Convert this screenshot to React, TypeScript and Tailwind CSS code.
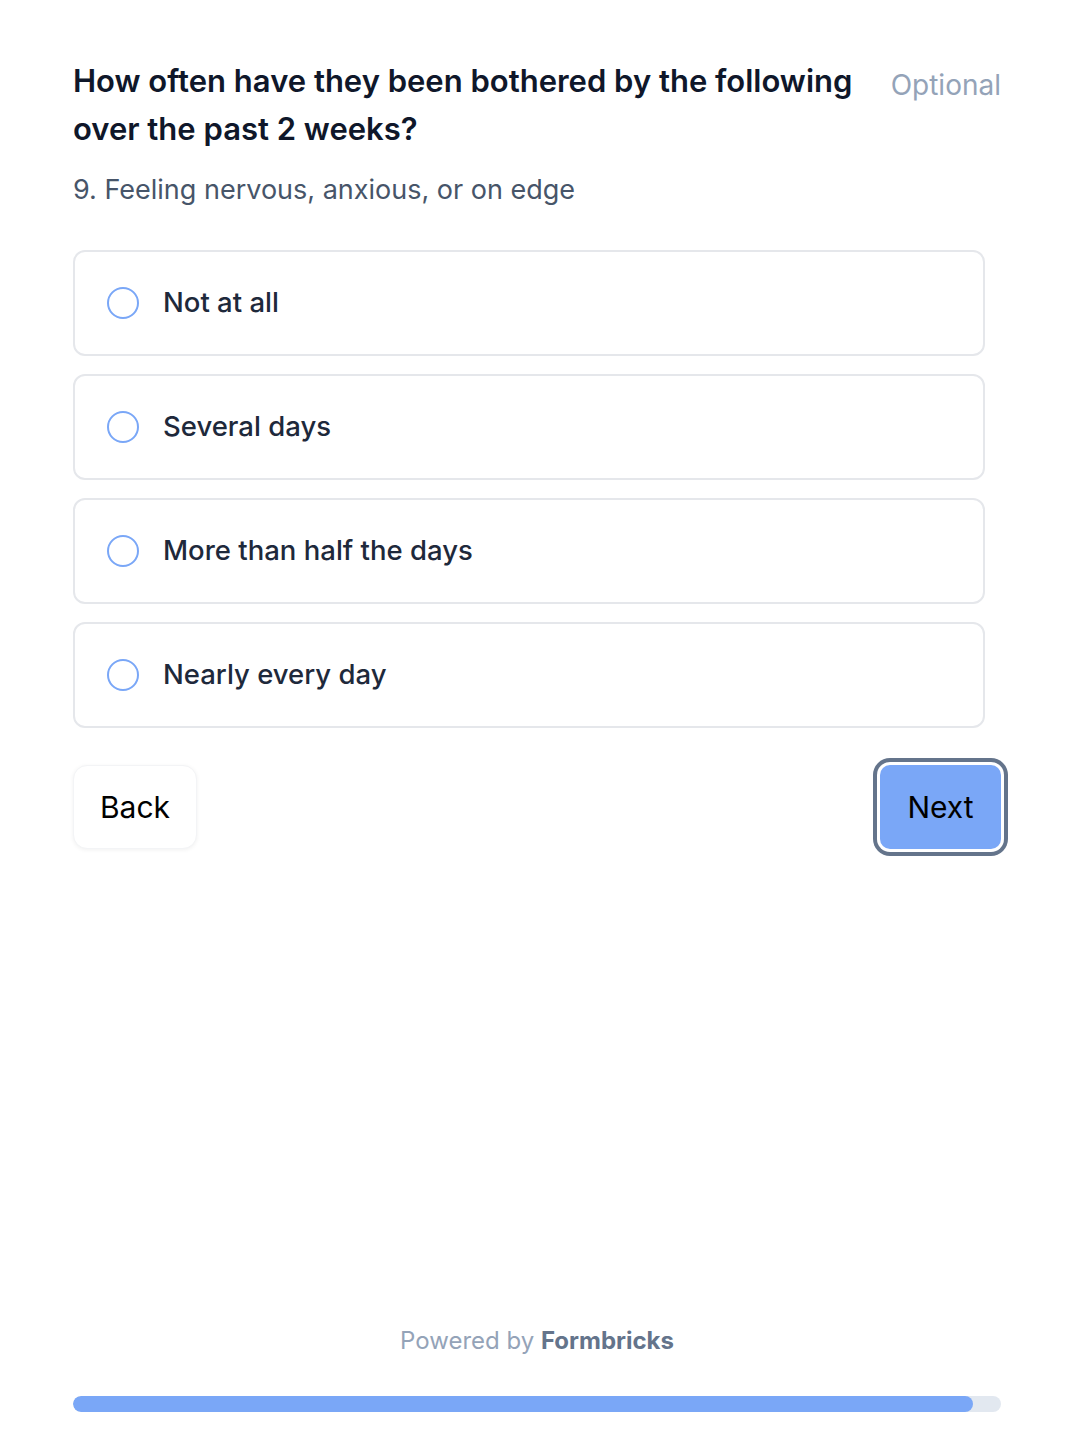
import React from "react";

const options = ["Not at all", "Several days", "More than half the days", "Nearly every day"];

export default function App() {
  return (
    <div className="w-[1082px] min-h-[1436px] bg-white font-['Inter','Liberation_Sans',sans-serif] flex flex-col pl-[73px] pr-[81px] pt-[57px] pb-[24px]">
      <div className="flex items-start justify-between">
        <h3 className="flex-1 text-[31px] leading-[48px] font-semibold text-[#0f172a]">
          How often have they been bothered by the following over the past 2 weeks?
        </h3>
        <span className="ml-[30px] mt-[9px] text-[28px] leading-[38px] text-[#94a3b8]">Optional</span>
      </div>
      <p className="mt-[19px] text-[27px] leading-[36px] text-[#475569]">9. Feeling nervous, anxious, or on edge</p>

      <div className="mt-[42px] w-[912px] flex flex-col gap-[18px]">
        {options.map((o) => (
          <label
            key={o}
            className="h-[106px] rounded-[12px] border-2 border-[#e5e7eb] bg-white flex items-center pl-[32px]"
          >
            <span className="w-[32px] h-[32px] rounded-full border-2 border-[#7aa7f7] bg-white shrink-0" />
            <span className="ml-[24px] text-[27.5px] font-medium text-[#1e293b]">{o}</span>
          </label>
        ))}
      </div>

      <div className="mt-[37px] flex items-center justify-between">
        <button className="h-[84px] w-[124px] rounded-[14px] bg-white shadow-[0_1px_4px_rgba(0,0,0,0.06)] border border-[#f3f4f6] text-[30px] text-black">
          Back
        </button>
        <button className="h-[84px] w-[121px] rounded-[10px] bg-[#7aa7f7] text-[30px] text-black ring-4 ring-[#64748b] ring-offset-[3px] ring-offset-white">
          Next
        </button>
      </div>

      <div className="mt-auto flex flex-col">
        <p className="text-center text-[24px] leading-[32px] text-[#94a3b8]">
          Powered by <span className="font-bold text-[#64748b]">Formbricks</span>
        </p>
        <div className="mt-[39px] h-[16px] w-full rounded-full bg-[#e2e8f0] overflow-hidden">
          <div className="h-full rounded-full bg-[#7aa7f7]" style={{ width: "97%" }} />
        </div>
      </div>
    </div>
  );
}
